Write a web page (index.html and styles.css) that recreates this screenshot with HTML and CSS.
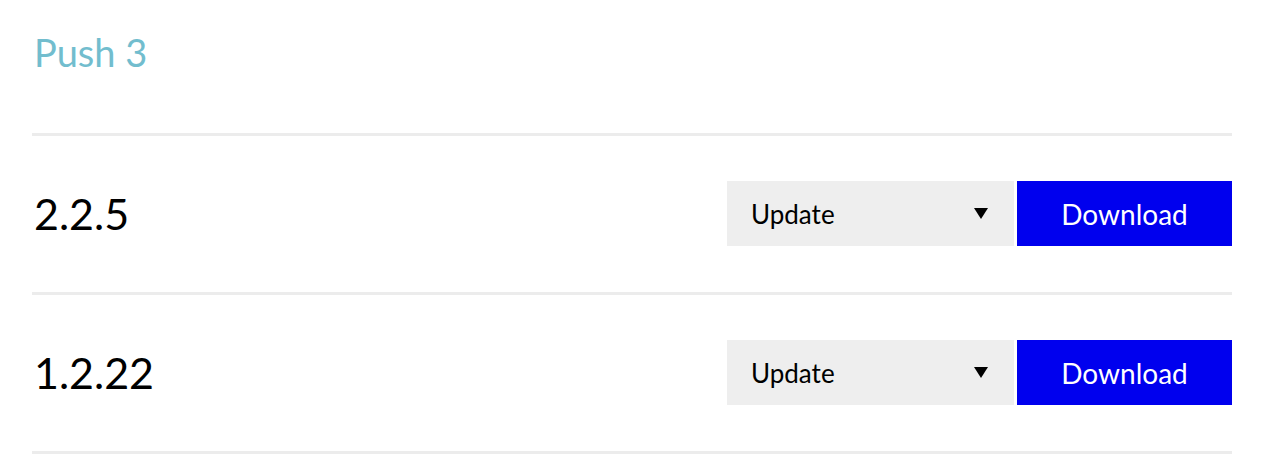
FILE: index.html
```html
<!DOCTYPE html>
<html>
<head>
<meta charset="utf-8">
<link rel="stylesheet" href="styles.css">
</head>
<body>
<div class="page">
  <div class="header">
    <h2 class="title">Push 3</h2>
  </div>
  <div class="row">
    <div class="version">2.2.5</div>
    <div class="actions">
      <div class="select"><span>Update</span><span class="arrow"></span></div>
      <div class="btn">Download</div>
    </div>
  </div>
  <div class="row">
    <div class="version">1.2.22</div>
    <div class="actions">
      <div class="select"><span>Update</span><span class="arrow"></span></div>
      <div class="btn">Download</div>
    </div>
  </div>
  <div class="end"></div>
</div>
</body>
</html>
```
FILE: styles.css
```css
html, body {
  margin: 0;
  padding: 0;
  background: #ffffff;
}
body {
  font-family: Lato, "Noto Sans", sans-serif;
  color: #000;
}
.page {
  width: 1200px;
  margin-left: 32px;
}
.header {
  height: 133px;
  box-sizing: border-box;
  padding-top: 29px;
  padding-left: 2px;
}
.title {
  margin: 0;
  font-size: 38px;
  line-height: 46px;
  font-weight: 400;
  color: #72bdce;
}
.row {
  border-top: 3px solid #ececec;
  padding: 45px 0 46px;
  display: flex;
  align-items: center;
  justify-content: space-between;
}
.version {
  font-size: 43px;
  padding-left: 2px;
  line-height: 48px;
}
.actions {
  display: flex;
  gap: 3px;
}
.select {
  width: 287px;
  height: 65px;
  box-sizing: border-box;
  background: #eeeeee;
  padding: 0 26px 0 24px;
  display: flex;
  align-items: center;
  justify-content: space-between;
  font-size: 26px;
}
.arrow {
  width: 0;
  height: 0;
  border-left: 7.5px solid transparent;
  border-right: 7.5px solid transparent;
  border-top: 11px solid #000;
}
.btn {
  width: 215px;
  height: 65px;
  background: #0000ee;
  color: #fff;
  font-size: 28px;
  display: flex;
  align-items: center;
  justify-content: center;
}
.end {
  border-top: 3px solid #ececec;
}
```
